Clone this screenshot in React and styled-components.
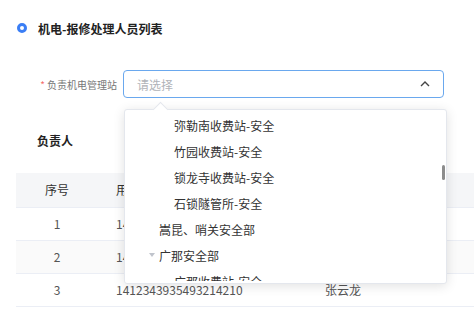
import React from 'react';
import styled, { createGlobalStyle } from 'styled-components';

const GlobalStyle = createGlobalStyle`
  html, body {
    margin: 0;
    padding: 0;
    background: #fff;
    overflow: hidden;
  }
  body {
    font-family: "Noto Sans CJK SC", "Noto Sans", sans-serif;
    color: #333;
  }
`;

const treeItems = [
  { label: '弥勒南收费站-安全', level: 2 },
  { label: '竹园收费站-安全', level: 2 },
  { label: '锁龙寺收费站-安全', level: 2 },
  { label: '石锁隧管所-安全', level: 2 },
  { label: '嵩昆、哨关安全部', level: 1 },
  { label: '广那安全部', level: 1, expanded: true },
  { label: '广那收费站-安全', level: 2 },
];

const rows = [
  { no: 1, id: '1412343935493214210', name: '张云龙' },
  { no: 2, id: '1412343935493214210', name: '张云龙' },
  { no: 3, id: '1412343935493214210', name: '张云龙' },
];

function App() {
  return (
    <Page>
      <GlobalStyle />
      <TitleRow>
        <Radio />
        <Title>机电-报修处理人员列表</Title>
      </TitleRow>

      <FormRow>
        <Label><Star>*</Star>负责机电管理站</Label>
        <SelectWrap>
          <Select>
            <Placeholder>请选择</Placeholder>
            <svg width="10" height="6" viewBox="0 0 10 6">
              <polyline points="1,5 5,1 9,5" fill="none" stroke="#444" strokeWidth="1.4" />
            </svg>
          </Select>
          <Dropdown>
            <Arrow />
            <TreeList>
              {treeItems.map((item, i) => (
                <TreeItem key={i} level={item.level}>
                  <Caret>{item.expanded && <CaretDown />}</Caret>
                  {item.label}
                </TreeItem>
              ))}
            </TreeList>
            <ScrollThumb />
          </Dropdown>
        </SelectWrap>
      </FormRow>

      <SubTitle>负责人</SubTitle>

      <Table>
        <colgroup>
          <col style={{ width: 82 }} />
          <col style={{ width: 209 }} />
          <col />
        </colgroup>
        <thead>
          <tr>
            <Th>序号</Th>
            <Th align="left">用户ID</Th>
            <Th align="left">姓名</Th>
          </tr>
        </thead>
        <tbody>
          {rows.map((r, i) => (
            <Tr key={r.no} striped={i % 2 === 1}>
              <Td>{r.no}</Td>
              <Td align="left">{r.id}</Td>
              <Td align="left">{r.name}</Td>
            </Tr>
          ))}
        </tbody>
      </Table>
    </Page>
  );
}

export default App;

const Page = styled.div`
  width: 474px;
  height: 310px;
  padding: 18px 0 0 16px;
  box-sizing: border-box;
  overflow: hidden;
`;

const TitleRow = styled.div`
  display: flex;
  align-items: center;
  height: 20px;
  padding-left: 1px;
`;

const Radio = styled.span`
  width: 10px;
  height: 10px;
  border-radius: 50%;
  border: 3px solid #3a7ef5;
  box-sizing: border-box;
  margin-right: 11px;
`;

const Title = styled.span`
  font-size: 12px;
  font-weight: 700;
  color: #222;
`;

const FormRow = styled.div`
  display: flex;
  align-items: center;
  margin-top: 32px;
`;

const Label = styled.label`
  width: 107px;
  padding-right: 6px;
  box-sizing: border-box;
  text-align: right;
  font-size: 10px;
  color: #777;
  white-space: nowrap;
`;

const Star = styled.span`
  color: #f56c6c;
  margin-right: 2px;
`;

const SelectWrap = styled.div`
  position: relative;
  width: 321px;
`;

const Select = styled.div`
  height: 28px;
  box-sizing: border-box;
  border: 1px solid #6aa8ee;
  border-radius: 4px;
  display: flex;
  align-items: center;
  justify-content: space-between;
  padding: 0 13px 0 13px;
`;

const Placeholder = styled.span`
  font-size: 12px;
  color: #b0b3b8;
`;

const Dropdown = styled.div`
  position: absolute;
  top: 39px;
  left: 1px;
  width: 323px;
  height: 175px;
  background: #fff;
  border: 1px solid #e4e7ed;
  border-radius: 3px;
  box-shadow: 0 2px 12px rgba(0, 0, 0, 0.12);
  box-sizing: border-box;
  z-index: 10;
`;

const Arrow = styled.span`
  position: absolute;
  top: -6px;
  left: 30px;
  width: 10px;
  height: 10px;
  background: #fff;
  border-left: 1px solid #e4e7ed;
  border-top: 1px solid #e4e7ed;
  transform: rotate(45deg);
`;

const TreeList = styled.ul`
  list-style: none;
  margin: 0;
  padding: 2px 0 0;
  height: 171px;
  box-sizing: border-box;
  overflow: hidden;
`;

const TreeItem = styled.li`
  display: flex;
  align-items: center;
  height: 26px;
  padding-left: ${p => 20 + (p.level - 1) * 15}px;
  font-size: 12px;
  color: #333;
  white-space: nowrap;
`;

const Caret = styled.span`
  display: inline-flex;
  align-items: center;
  justify-content: center;
  width: 14px;
`;

const CaretDown = styled.span`
  width: 0;
  height: 0;
  border-left: 3px solid transparent;
  border-right: 3px solid transparent;
  border-top: 4px solid #c0c4cc;
`;

const ScrollThumb = styled.span`
  position: absolute;
  right: 1px;
  top: 55px;
  width: 3px;
  height: 15px;
  border-radius: 2px;
  background: #8c8c8c;
`;

const SubTitle = styled.div`
  margin-top: 33px;
  padding-left: 21px;
  height: 20px;
  line-height: 20px;
  font-size: 12px;
  font-weight: 700;
  color: #222;
`;

const Table = styled.table`
  margin-top: 22px;
  width: 470px;
  border-collapse: collapse;
  table-layout: fixed;
  font-size: 12px;
`;

const Th = styled.th`
  height: 34px;
  box-sizing: border-box;
  background: #f5f6f8;
  font-weight: 400;
  color: #333;
  text-align: ${p => p.align || 'center'};
  padding: 0 0 0 ${p => (p.align === 'left' ? '18px' : '0')};
  border-bottom: 1px solid #ebeef5;
`;

const Tr = styled.tr`
  background: ${p => (p.striped ? '#fafafa' : '#fff')};
`;

const Td = styled.td`
  height: 33px;
  box-sizing: border-box;
  color: #555;
  text-align: ${p => p.align || 'center'};
  padding: 0 0 0 ${p => (p.align === 'left' ? '18px' : '0')};
  border-bottom: 1px solid #ebeef5;
  white-space: nowrap;
`;
